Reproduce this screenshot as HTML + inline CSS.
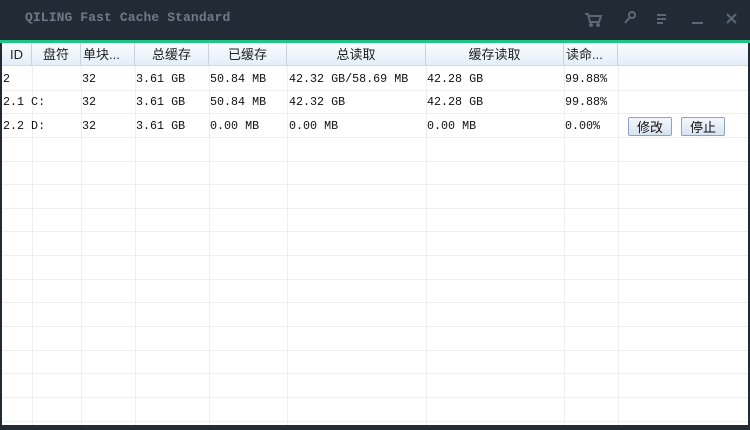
<!DOCTYPE html>
<html><head><meta charset="utf-8"><style>
*{margin:0;padding:0;box-sizing:border-box}
body{width:750px;height:430px;background:#222a35;position:relative;overflow:hidden;font-family:"Liberation Mono","Noto Sans CJK SC",monospace}
.title{position:absolute;left:25px;top:10px;color:#6f7987;font:bold 13px "Liberation Mono",monospace;letter-spacing:0.1px}
.green{position:absolute;left:0;top:40px;width:750px;height:3px;background:#1fc585}
.main{position:absolute;left:2px;top:43px;width:746px;height:382px;background:#fff;overflow:hidden}
.hdr{position:absolute;left:0;top:0;height:23px;width:746px;background:linear-gradient(#fafcff,#e4eef9);border-bottom:1px solid #cfdbe8}
.hc{position:absolute;top:0;height:23px;line-height:23px;font-size:13px;font-family:"Liberation Sans","Noto Sans CJK SC",sans-serif;color:#222;text-align:center;border-right:1px solid #c5d3e3}
.vl{position:absolute;top:23px;bottom:0;width:1px;background:#eeeeee}
.hl{position:absolute;left:0;width:746px;height:1px;background:#eeeeee}
.c{position:absolute;font-size:11.7px;color:#111;line-height:14px}
.btn{position:absolute;top:74px;height:19px;width:44px;border:1px solid #8aa4c8;border-radius:2px;background:linear-gradient(#f4f8fd,#d7e3f2);font:13px "Noto Sans CJK SC",sans-serif;text-align:center;line-height:17px;color:#111}
svg{position:absolute}
</style></head><body>
<div class="title">QILING Fast Cache Standard</div>
<svg width="750" height="40" style="left:0;top:0" fill="none" stroke="#5d6877" stroke-width="2">
<path d="M585 14h3l2 8h9l2-6h-12" /><circle cx="591" cy="25" r="1" fill="#5d6877"/><circle cx="598" cy="25" r="1" fill="#5d6877"/>
<circle cx="632" cy="15" r="3"/><path d="M630 17l-5 6"/>
<path d="M657 15h9M657 19h9M657 23h6"/>
<path d="M692 23h11"/>
<path d="M727 14l9 9M736 14l-9 9"/>
</svg>
<div class="green"></div>
<div class="main">
<div class="hdr">
<div class="hc" style="left:0;width:30px">ID</div>
<div class="hc" style="left:30px;width:49px">盘符</div>
<div class="hc" style="left:79px;width:54px;text-align:left;padding-left:2px">单块...</div>
<div class="hc" style="left:133px;width:74px">总缓存</div>
<div class="hc" style="left:207px;width:78px">已缓存</div>
<div class="hc" style="left:285px;width:139px">总读取</div>
<div class="hc" style="left:424px;width:138px">缓存读取</div>
<div class="hc" style="left:562px;width:54px;text-align:left;padding-left:2px">读命...</div>
</div>
<div class="vl" style="left:29.5px"></div><div class="vl" style="left:79px"></div><div class="vl" style="left:133px"></div><div class="vl" style="left:207px"></div><div class="vl" style="left:285px"></div><div class="vl" style="left:424px"></div><div class="vl" style="left:562px"></div><div class="vl" style="left:616px"></div>
<div class="hl" style="top:47px"></div><div class="hl" style="top:70px"></div><div class="hl" style="top:94px"></div><div class="hl" style="top:118px"></div><div class="hl" style="top:141px"></div><div class="hl" style="top:165px"></div><div class="hl" style="top:188px"></div><div class="hl" style="top:212px"></div><div class="hl" style="top:236px"></div><div class="hl" style="top:259px"></div><div class="hl" style="top:283px"></div><div class="hl" style="top:307px"></div><div class="hl" style="top:330px"></div><div class="hl" style="top:354px"></div><div class="hl" style="top:378px"></div>
<div class="c" style="top:29px;left:1px">2</div>
<div class="c" style="top:29px;left:80px">32</div><div class="c" style="top:29px;left:134px">3.61 GB</div><div class="c" style="top:29px;left:208px">50.84 MB</div><div class="c" style="top:29px;left:287px">42.32 GB/58.69 MB</div><div class="c" style="top:29px;left:425px">42.28 GB</div><div class="c" style="top:29px;left:563px">99.88%</div>
<div class="c" style="top:52px;left:1px">2.1 C:</div>
<div class="c" style="top:52px;left:80px">32</div><div class="c" style="top:52px;left:134px">3.61 GB</div><div class="c" style="top:52px;left:208px">50.84 MB</div><div class="c" style="top:52px;left:287px">42.32 GB</div><div class="c" style="top:52px;left:425px">42.28 GB</div><div class="c" style="top:52px;left:563px">99.88%</div>
<div class="c" style="top:76px;left:1px">2.2 D:</div>
<div class="c" style="top:76px;left:80px">32</div><div class="c" style="top:76px;left:134px">3.61 GB</div><div class="c" style="top:76px;left:208px">0.00 MB</div><div class="c" style="top:76px;left:287px">0.00 MB</div><div class="c" style="top:76px;left:425px">0.00 MB</div><div class="c" style="top:76px;left:563px">0.00%</div>
<div class="btn" style="left:626px">修改</div>
<div class="btn" style="left:679px">停止</div>
</div>
</body></html>
